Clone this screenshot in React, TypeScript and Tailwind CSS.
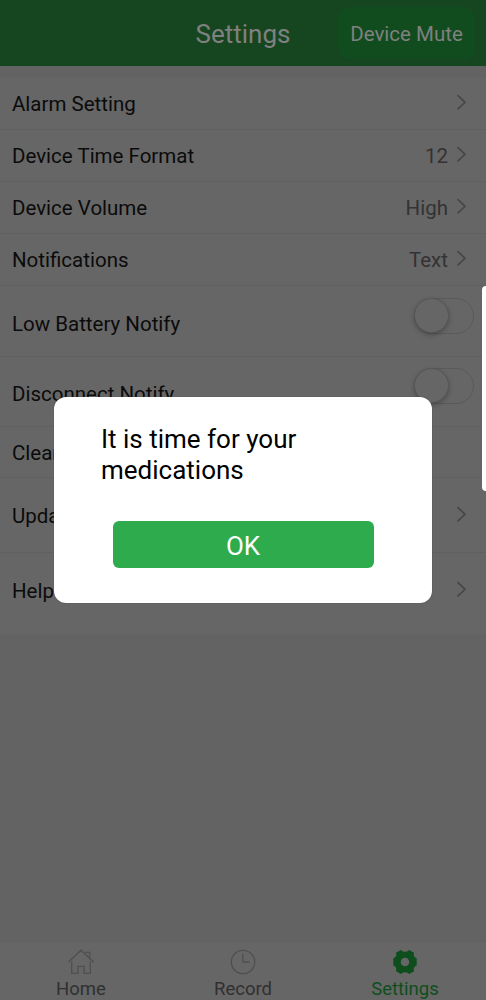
import React from "react";

function Chevron() {
  return (
    <svg width="11" height="17" viewBox="0 0 11 17" fill="none" stroke="#474747" strokeWidth="1.7" className="shrink-0">
      <path d="M1.5 1.2 9 8.3 1.5 15.4" />
    </svg>
  );
}

function Toggle() {
  return (
    <span className="flex h-9 w-[60px] shrink-0 rounded-full border border-[#5a5a5a]">
      <span className="-mt-px -ml-px h-[35px] w-[35px] rounded-full border border-[#565656] bg-[#666666] shadow-[0_2px_5px_rgba(0,0,0,0.26)]" />
    </span>
  );
}

type RowProps = {
  label: string;
  height: string;
  labelPad?: string;
  value?: string;
  control?: "chevron" | "toggle" | "none";
  controlPad?: string;
};

function Row({ label, height, labelPad = "pt-px", value, control = "chevron", controlPad = "pb-[2px]" }: RowProps) {
  return (
    <li className={`flex items-center border-b border-[#606060] pl-3 last:border-b-0 ${height}`}>
      <span className={`flex-1 whitespace-nowrap ${labelPad}`}>{label}</span>
      {value && <span className="mr-[8px] pt-px text-[#333333]">{value}</span>}
      {control === "chevron" && (
        <span className={`mr-[19px] ${controlPad}`}>
          <Chevron />
        </span>
      )}
      {control === "toggle" && (
        <span className="mr-[12px] pb-[11px]">
          <Toggle />
        </span>
      )}
    </li>
  );
}

function HomeIcon() {
  return (
    <svg width="28" height="26" viewBox="0 0 28 26" fill="none" stroke="#4f4f4f" strokeWidth="1.3">
      <path d="M1.3 13.3 14 1.2l12.7 12.1M4.7 12.5v11.8h6.2v-7h6.2v7h6.2V12.5M18.2 3.3h4.6v5" />
    </svg>
  );
}

function ClockIcon() {
  return (
    <svg width="26" height="26" viewBox="0 0 26 26" fill="none" stroke="#4f4f4f" strokeWidth="1.3">
      <circle cx="13" cy="13" r="11.7" />
      <path d="M12.8 5v8h6.8" />
    </svg>
  );
}

function GearIcon() {
  return (
    <svg width="26" height="26" viewBox="0 0 26 26" fill="#0d4e1c">
      <path
        fillRule="evenodd"
        d="M8.8 1 L10.6 2.3 Q13 3.4 15.4 2.3 L17.2 1 L22 3.8 L21.7 6.2 Q22 8.3 24.7 9.4 L24.7 16.6 Q22 17.7 21.7 19.8 L22 22.2 L17.2 25 L15.4 23.7 Q13 22.6 10.6 23.7 L8.8 25 L4 22.2 L4.3 19.8 Q4 17.7 1.3 16.6 L1.3 9.4 Q4 8.3 4.3 6.2 L4 3.8 Z M13 8.7a4.3 4.3 0 1 0 0 8.6 4.3 4.3 0 0 0 0-8.6Z"
      />
    </svg>
  );
}

export default function App() {
  return (
    <div className="relative flex h-[1000px] w-[486px] flex-col overflow-hidden bg-[#636363] font-['Roboto',sans-serif] text-[20.5px] leading-6 text-[#0b0b0b]">
      <header className="grid h-[66px] shrink-0 grid-cols-3 items-center bg-[#15461f]">
        <h1 className="col-start-2 pt-px text-center text-[26px] leading-8 text-[#808080]">Settings</h1>
        <button className="mr-[11px] h-[52px] w-[137px] justify-self-end rounded-xl bg-[#114c1e] pt-[2px] text-[20.5px] text-[#808080]">
          Device Mute
        </button>
      </header>

      <ul className="mt-3 shrink-0 bg-[#666666]">
        <Row label="Alarm Setting" height="h-[52px]" />
        <Row label="Device Time Format" height="h-[52px]" value="12" />
        <Row label="Device Volume" height="h-[52px]" value="High" />
        <Row label="Notifications" height="h-[52px]" value="Text" />
        <Row label="Low Battery Notify" height="h-[71px]" labelPad="pt-[5px]" control="toggle" />
        <Row label="Disconnect Notify" height="h-[70px]" labelPad="pt-[5px]" control="toggle" />
        <Row label="Clear Data" height="h-[51px]" control="none" />
        <Row label="Update" height="h-[75px]" controlPad="pb-px" />
        <Row label="Help" height="h-[81px]" labelPad="pb-[5px]" controlPad="pb-[8px]" />
      </ul>

      <nav className="mt-auto grid h-[59px] shrink-0 grid-cols-3 border-t border-[#606060] bg-[#666666] text-[18.5px] leading-[22px] text-[#303030]">
        <div className="flex flex-col items-center pt-[7px]">
          <HomeIcon />
          <span className="mt-[3px]">Home</span>
        </div>
        <div className="flex flex-col items-center pt-[7px]">
          <ClockIcon />
          <span className="mt-[3px]">Record</span>
        </div>
        <div className="flex flex-col items-center pt-[7px] text-[#0d4e1c]">
          <GearIcon />
          <span className="mt-[3px]">Settings</span>
        </div>
      </nav>

      <div className="absolute top-[286px] right-0 h-[205px] w-[4px] rounded-l-[6px] bg-white" />

      <div className="absolute inset-0 flex items-center justify-center">
        <div role="dialog" className="flex h-[206px] w-[378px] flex-col items-center rounded-xl bg-white pt-[27px] shadow-[0_0_1px_#333]">
          <p className="w-[284px] pr-20 text-[26px] leading-[30.5px] text-black">It is time for your medications</p>
          <button className="mt-[36px] h-[47px] w-[261px] rounded-[6px] bg-[#2eab4c] pt-[3px] text-[26px] text-white">OK</button>
        </div>
      </div>
    </div>
  );
}
